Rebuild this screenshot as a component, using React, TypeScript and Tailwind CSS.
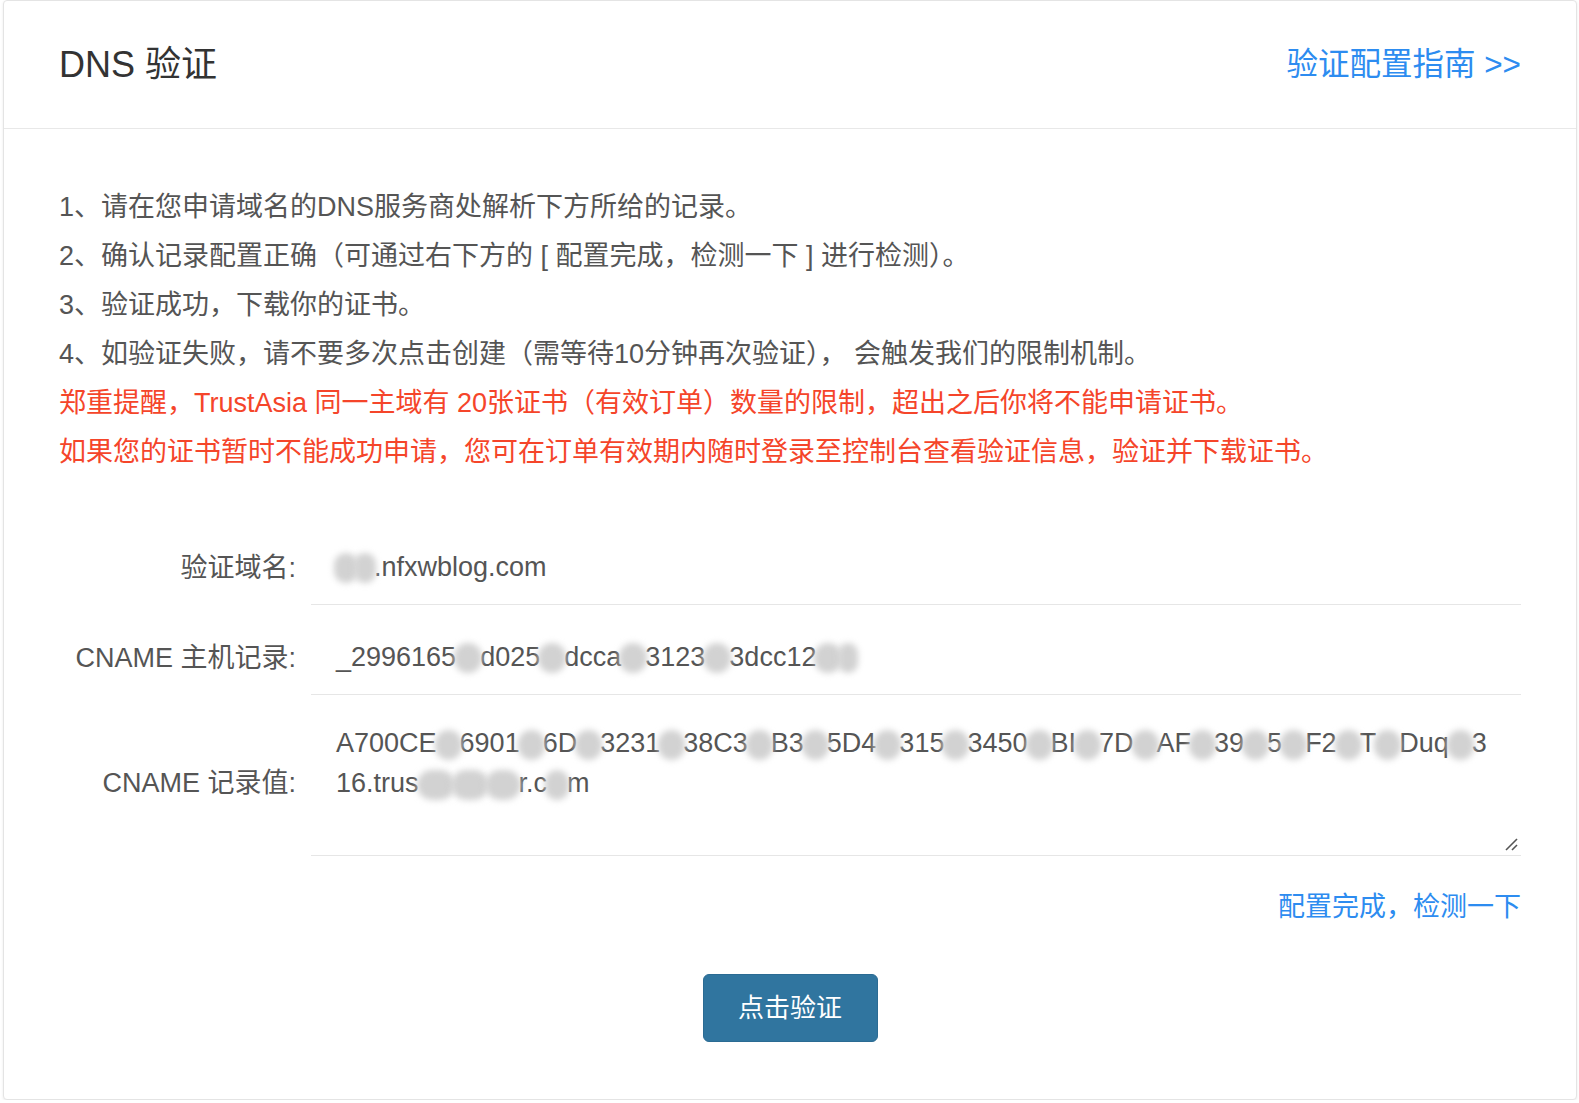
import React from 'react';

const font = { fontFamily: '"Liberation Sans", "Noto Sans CJK SC", sans-serif' };

function Blob({ className = 'w-[28px]' }: { className?: string }) {
    return <span className={`inline-block h-[30px] rounded-full bg-[#d2d2d2] blur-[3px] align-middle -mx-[2px] ${className}`} />;
}

const hostParts = ['_2996165', 'd025', 'dcca', '3123', '3dcc12'];
const valueParts = ['A700CE', '6901', '6D', '3231', '38C3', 'B3', '5D4', '315', '3450', 'BI', '7D', 'AF', '39', '5', 'F2', 'T', 'Duq', '3'];

export default function App() {
    return (
        <div className="bg-white pl-[3px] pr-[2px]" style={font}>
            <div className="bg-white border border-[#e4e4e4] rounded-[4px] shadow-[0_1px_3px_rgba(0,0,0,0.08)]">
                {/* Header */}
                <div className="h-[128px] flex items-center justify-between pl-[55px] pr-[55px] border-b border-[#e8e8e8]">
                    <h2 className="text-[36px] text-[#333] leading-none">DNS 验证</h2>
                    <a href="#" className="text-[31.5px] text-[#2d8cf0] leading-none">验证配置指南 &gt;&gt;</a>
                </div>

                {/* Body */}
                <div className="pt-[54px] pb-[57px] px-[55px]">
                    <div className="text-[27px] leading-[49px] text-[#555]">
                        <p>1、请在您申请域名的DNS服务商处解析下方所给的记录。</p>
                        <p>2、确认记录配置正确（可通过右下方的 [ 配置完成，检测一下 ] 进行检测）。</p>
                        <p>3、验证成功，下载你的证书。</p>
                        <p>4、如验证失败，请不要多次点击创建（需等待10分钟再次验证）， 会触发我们的限制机制。</p>
                        <p className="text-[#f5452a]">郑重提醒，TrustAsia 同一主域有 20张证书（有效订单）数量的限制，超出之后你将不能申请证书。</p>
                        <p className="text-[#f5452a]">如果您的证书暂时不能成功申请，您可在订单有效期内随时登录至控制台查看验证信息，验证并下载证书。</p>
                    </div>

                    {/* Form */}
                    <div className="mt-[54px] -ml-[55px] text-[27px] text-[#555]">
                        <div className="flex items-center mb-[16px]">
                            <label className="w-[292px] text-right shrink-0">验证域名:</label>
                            <div className="ml-[15px] flex-1 h-[74px] flex items-center pl-[25px] border-b border-[#e6e6e6]">
                                <Blob className="w-[24px]" />
                                <Blob className="w-[22px]" />
                                <span>.nfxwblog.com</span>
                            </div>
                        </div>
                        <div className="flex items-center mb-[16px]">
                            <label className="w-[292px] text-right shrink-0">CNAME 主机记录:</label>
                            <div className="ml-[15px] flex-1 h-[74px] flex items-center pl-[25px] border-b border-[#e6e6e6] whitespace-nowrap">
                                {hostParts.map((p, i) => (
                                    <React.Fragment key={i}>
                                        <span>{p}</span>
                                        <Blob className="w-[28px]" />
                                    </React.Fragment>
                                ))}
                                <Blob className="w-[20px]" />
                            </div>
                        </div>
                        <div className="flex items-center">
                            <label className="w-[292px] text-right shrink-0">CNAME 记录值:</label>
                            <div className="relative ml-[15px] flex-1 h-[145px] pt-[12px] pl-[25px] border-b border-[#e6e6e6] leading-[40px]">
                                <div className="whitespace-nowrap">
                                    {valueParts.map((p, i) => (
                                        <React.Fragment key={i}>
                                            <span>{p}</span>
                                            {i < valueParts.length - 1 && <Blob className="w-[27px]" />}
                                        </React.Fragment>
                                    ))}
                                </div>
                                <div className="whitespace-nowrap">
                                    <span>16.trus</span>
                                    <Blob className="w-[38px]" />
                                    <Blob className="w-[38px]" />
                                    <Blob className="w-[36px]" />
                                    <span>r.c</span>
                                    <Blob className="w-[24px]" />
                                    <span>m</span>
                                </div>
                                <svg className="absolute right-[2px] bottom-[3px]" width="16" height="16" viewBox="0 0 16 16">
                                    <line x1="3" y1="14" x2="14" y2="3" stroke="#555" strokeWidth="1.6" />
                                    <line x1="9" y1="14" x2="14" y2="9" stroke="#555" strokeWidth="1.6" />
                                </svg>
                            </div>
                        </div>
                    </div>

                    <div className="mt-[27px] text-right leading-[49px]">
                        <a href="#" className="text-[27px] text-[#2d8cf0]">配置完成，检测一下</a>
                    </div>

                    <div className="mt-[39px] flex justify-center">
                        <button className="w-[175px] h-[68px] rounded-[6px] bg-[#30759f] border border-[#2b6b93] text-white text-[26px]">
                            点击验证
                        </button>
                    </div>
                </div>
            </div>
        </div>
    );
}
